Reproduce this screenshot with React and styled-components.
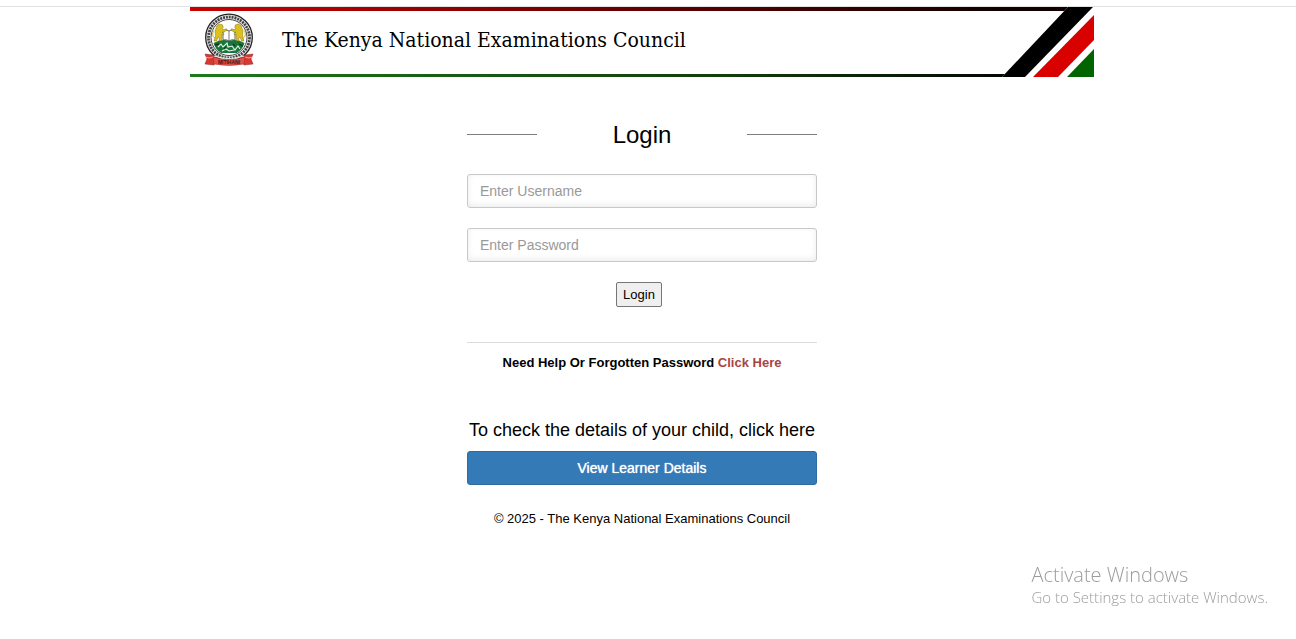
import React, { useState } from "react";
import styled, { createGlobalStyle } from "styled-components";

const GlobalStyle = createGlobalStyle`
  * {
    box-sizing: border-box;
  }
  body {
    margin: 0;
    background: white;
    color: black;
    font-family: "Liberation Sans", Arial, sans-serif;
    font-size: 13px;
    line-height: 20px;
  }
`;

const PageWrapper = styled.div`
  margin-top: 6px;
  padding: 0 12px 0 0;
  border-top: 1px solid #e2e2e2;
`;

const Banner = styled.header`
  display: flex;
  justify-content: space-between;
  max-width: 904px;
  height: 70px;
  margin: 0 auto;
  background:
    linear-gradient(to right, #c80000, #b40000 12%, #100000 90%) top / 100% 4px no-repeat,
    linear-gradient(to right, #1d7a1d, #123c0c 60%, #000 95%) bottom / 100% 3px no-repeat;
`;

const Brand = styled.div`
  display: flex;
  align-items: center;
  gap: 28px;
  padding: 0 0 4px 14px;
`;

const BrandName = styled.div`
  font-family: "DejaVu Serif Condensed", "DejaVu Serif", serif;
  font-size: 21px;
  line-height: 28px;
`;

const LoginWrapper = styled.main`
  width: 350px;
  max-width: 100%;
  margin: 0 auto;
  padding-top: 42px;
  text-align: center;
`;

const Title = styled.h1`
  display: flex;
  align-items: center;
  justify-content: space-between;
  margin: 0 0 24px;
  font-size: 24px;
  font-weight: 400;
  line-height: 31px;

  &::before,
  &::after {
    content: "";
    width: 20%;
    height: 1px;
    background: #7e7e7e;
  }
`;

const Field = styled.input`
  display: block;
  width: 100%;
  height: 34px;
  margin-bottom: 20px;
  padding: 6px 12px;
  border: 1px solid #c8c8c8;
  border-radius: 3px;
  background: white;
  box-shadow: inset 0 -2px 6px rgba(0, 0, 0, 0.08);
  font-family: inherit;
  font-size: 14px;

  &::placeholder {
    color: #999;
    opacity: 1;
  }
`;

const LoginButton = styled.button`
  display: block;
  height: 25px;
  margin: 0 auto;
  padding: 0 6px;
  border: 1px solid #767676;
  border-radius: 2px;
  background: #efefef;
  color: black;
  font-family: inherit;
  font-size: 13px;
  cursor: pointer;
`;

const ButtonRow = styled.div`
  padding: 0 6px 35px 0;
  border-bottom: 1px solid #ddd;
`;

const Help = styled.p`
  margin: 0;
  padding: 10px 0 45px;
  font-weight: bold;

  a {
    color: #a94442;
    text-decoration: none;
  }
`;

const Hint = styled.p`
  margin: 0;
  font-size: 18px;
  line-height: 24px;
  white-space: nowrap;
`;

const LearnerLink = styled.a`
  display: block;
  margin: 9px 0 24px;
  padding: 6px 12px;
  border: 1px solid #2e6da4;
  border-radius: 3px;
  background: #337ab7;
  color: white;
  font-size: 14px;
  text-decoration: none;
  text-shadow: 0 0 1px white;
`;

const Footer = styled.footer`
  font-size: 13px;
`;

const Watermark = styled.aside`
  position: fixed;
  right: 28px;
  bottom: 32px;
  color: #9c9c9c;
  font-family: "Open Sans", "Noto Sans", sans-serif;
  font-weight: 300;
`;

const WatermarkTitle = styled.div`
  font-size: 20px;
  line-height: 25px;
`;

const WatermarkText = styled.div`
  font-size: 15px;
  line-height: 20px;
`;

const Lion = (props) => (
  <g {...props} fill="#dcc01c" stroke="#6e5c0c" strokeWidth="0.4">
    <path d="M13 12.500l2.500-1.500 3 .8.8 2.500-1.300 1.700 2 .7 2.500-1 .5 1.500-3 1.800-2 .2 2 1.300-.5 1.500-2-.5.5 3-1 3.500h-2l.2-3-1.200-1-1.500 4H10l1.500-5-.5-5z" />
    <path d="M11 25C8 24 8.500 20 9.500 17.500" fill="none" stroke="#c4a51c" strokeWidth="1" />
  </g>
);

const Emblem = () => (
  <svg width="50" height="54" viewBox="0 0 50 54" aria-hidden="true">
    <circle cx="25" cy="24.500" r="23.300" fill="#ececec" stroke="#222" strokeWidth="1.300" />
    <circle cx="25" cy="24.500" r="20.500" fill="none" stroke="#444" strokeWidth="2.800" strokeDasharray="2 .9" />
    <circle cx="25" cy="24.500" r="18" fill="white" stroke="#333" strokeWidth=".9" />
    <path d="M9.500 30q8-4.500 15.500-2 8-2.500 15.500 2-2 7-8 10H17.500q-6-3-8-10z" fill="#16773a" />
    <path d="M14 34l3-3 2 3 4-4 1 4 4-1 3 4 3-4 2 3M18 38l4-2 3 2 5-1" fill="none" stroke="#e8f4ea" strokeWidth="1.100" />
    <path d="M11 32l4-1M35 31l4 2M20 36l2-2M29 31l2 2" stroke="#0d3a1e" strokeWidth="1.300" />
    <path d="M19 17.500q3.500-1.500 6 .5 2.500-2 6-.5V27q-3.500-1-6 1-2.500-2-6-1z" fill="white" stroke="#444" strokeWidth=".8" />
    <path d="M25 18v10" stroke="#444" strokeWidth=".7" />
    <Lion />
    <Lion transform="translate(50 0) scale(-1 1)" />
    <path d="M1 41l8 1 3 3-2 7-9-1 2-5zM49 41l-8 1-3 3 2 7 9-1-2-5z" fill="#d8382f" stroke="#8d1e1b" strokeWidth=".5" />
    <path d="M1 44q5 2 8 0M49 44q-5 2-8 0" fill="none" stroke="#f3c9c5" strokeWidth=".8" />
    <path d="M9 44q16 5 32 0l-1 7q-15 3-30 0z" fill="#df5149" stroke="#9d2824" strokeWidth=".5" />
    <path d="M10 43q15 5 30 0" fill="none" stroke="#e8e8e8" strokeWidth="1.200" />
    <text x="25" y="51" textAnchor="middle" fontSize="5" fontWeight="bold" fill="#451310">MITIHANI</text>
  </svg>
);

const FlagStripes = () => (
  <svg width="92" height="70" viewBox="0 0 92 70" aria-hidden="true">
    <path d="M0 70L66 0H92V70z" fill="white" />
    <path d="M0 70L66 0H91L23 70z" fill="black" />
    <path d="M31 70L92 8V33L56 70z" fill="#d90000" />
    <path d="M65 70L92 42V70z" fill="#006400" />
  </svg>
);

function App() {
  const [username, setUsername] = useState("");
  const [password, setPassword] = useState("");

  const onSubmit = (e) => {
    e.preventDefault();
  };

  return (
    <>
      <GlobalStyle />
      <PageWrapper>
        <Banner>
          <Brand>
            <Emblem />
            <BrandName>The Kenya National Examinations Council</BrandName>
          </Brand>
          <FlagStripes />
        </Banner>
        <LoginWrapper>
          <Title>Login</Title>
          <form onSubmit={onSubmit}>
            <Field
              type="text"
              aria-label="Enter Username"
              placeholder="Enter Username"
              value={username}
              onChange={(e) => setUsername(e.target.value)}
            />
            <Field
              type="password"
              aria-label="Enter Password"
              placeholder="Enter Password"
              value={password}
              onChange={(e) => setPassword(e.target.value)}
            />
            <ButtonRow>
              <LoginButton type="submit">Login</LoginButton>
            </ButtonRow>
          </form>
          <Help>
            Need Help Or Forgotten Password <a href="#help">Click Here</a>
          </Help>
          <Hint>To check the details of your child, click here</Hint>
          <LearnerLink href="#learner">View Learner Details</LearnerLink>
          <Footer>© 2025 - The Kenya National Examinations Council</Footer>
        </LoginWrapper>
      </PageWrapper>
      <Watermark>
        <WatermarkTitle>Activate Windows</WatermarkTitle>
        <WatermarkText>Go to Settings to activate Windows.</WatermarkText>
      </Watermark>
    </>
  );
}

export default App;
